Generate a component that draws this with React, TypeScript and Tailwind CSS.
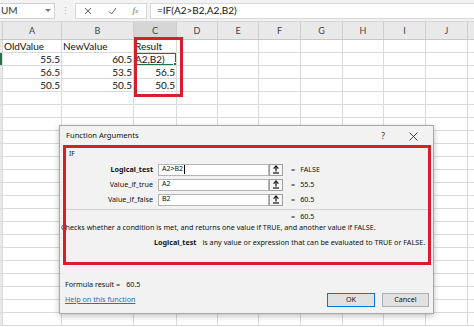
import React from 'react';

const colLetters = ['', 'A', 'B', 'C', 'D', 'E', 'F', 'G', 'H', 'I', 'J', ''];

type Cell = { t: string; right?: boolean };

const data: Record<number, Record<number, Cell>> = {
  0: { 1: { t: 'OldValue' }, 2: { t: 'NewValue' }, 3: { t: 'Result' } },
  1: { 1: { t: '55.5', right: true }, 2: { t: '60.5', right: true }, 3: { t: 'A2,B2)' } },
  2: { 1: { t: '56.5', right: true }, 2: { t: '53.5', right: true }, 3: { t: '56.5', right: true } },
  3: { 1: { t: '50.5', right: true }, 2: { t: '50.5', right: true }, 3: { t: '50.5', right: true } },
};

const gridCols =
  'grid grid-cols-[3px_59px_72px_43px_41px_41px_42px_42px_41px_42px_42px_42px]';

function RefButton() {
  return (
    <div className="w-[14px] h-[12px] border border-[#a0a0a0] bg-[#f6f6f6] flex items-center justify-center">
      <svg width="8" height="9" viewBox="0 0 8 9">
        <path d="M4 1 L4 6.5" stroke="#222" strokeWidth="1.3" />
        <path d="M1.6 3.6 L4 1 L6.4 3.6" stroke="#222" strokeWidth="1.3" fill="none" />
        <path d="M1 8 L7 8" stroke="#222" strokeWidth="1.3" />
      </svg>
    </div>
  );
}

function ArgRow({ label, value, result, bold }: { label: string; value: string; result: string; bold?: boolean }) {
  return (
    <div className="h-[15px] flex items-center">
      <div className={`w-[94px] shrink-0 text-right pr-[1px] ${bold ? 'font-bold' : ''}`}>{label}</div>
      <div className="ml-[4px] w-[111px] shrink-0 h-[12px] bg-white border border-[#b4b4b4] flex items-center pl-[3px] text-[7px]">
        {value}
        {bold && <span className="w-px h-[9px] bg-black ml-px" />}
      </div>
      <RefButton />
      <div className="ml-[8px]">=</div>
      <div className="ml-[5px]">{result}</div>
    </div>
  );
}

export default function App() {
  const rows = Array.from({ length: 22 }, (_, i) => i);
  return (
    <div className="relative w-[474px] h-[327px] overflow-hidden bg-white" style={{ fontFamily: 'Lato, "Liberation Sans", sans-serif' }}>
      {/* Formula bar */}
      <div className="h-[22px] bg-[#f3f3f3] flex items-center border-b border-[#d6d6d6] text-[10px] text-[#333]">
        <div className="w-[55px] h-[16px] bg-white border-y border-r border-[#d0d0d0] flex items-center justify-between pr-[3px]">
          <span className="pl-[1px]">UM</span>
          <svg width="6" height="4" viewBox="0 0 6 4"><path d="M0 0 L6 0 L3 3 Z" fill="#777" /></svg>
        </div>
        <div className="w-[20px] flex justify-center text-[#aaa] text-[9px]">⋮</div>
        <div className="w-[72px] h-[16px] bg-white border border-[#d8d8d8] flex items-center justify-around text-[#666]">
          <svg width="8" height="8" viewBox="0 0 8 8"><path d="M1 1 L7 7 M7 1 L1 7" stroke="#666" strokeWidth="1" /></svg>
          <svg width="9" height="8" viewBox="0 0 9 8"><path d="M1 4.5 L3.5 7 L8 1" stroke="#666" strokeWidth="1" fill="none" /></svg>
          <span className="italic text-[9px]" style={{ fontFamily: '"Liberation Serif", serif' }}>
            f<span className="text-[7px]">x</span>
          </span>
        </div>
        <div className="ml-[3px] flex-1 h-[16px] bg-white border-y border-l border-[#d8d8d8] flex items-center pl-[6px] text-[10px] text-[#111]">
          =IF(A2&gt;B2,A2,B2)
        </div>
      </div>

      {/* Column headers */}
      <div className={`${gridCols} h-[18px] bg-[#e9e9e9] border-b border-[#c8c8c8] text-[9px] text-[#444]`}>
        {colLetters.map((c, i) => (
          <div
            key={i}
            className={`flex items-center justify-center border-r border-[#cfcfcf] ${i === 3 ? 'bg-[#d6d6d6] text-[#1d5a37]' : ''}`}
          >
            {c}
          </div>
        ))}
      </div>

      {/* Cells */}
      {rows.map((r) => (
        <div key={r} className={`${gridCols} h-[13px] text-[10px] text-[#111]`}>
          {colLetters.map((_, c) => {
            const cell = data[r]?.[c];
            const selected = r === 1 && c === 3;
            return (
              <div
                key={c}
                className={`relative border-r border-b border-[#dadada] leading-[12px] px-[1px] whitespace-nowrap overflow-hidden ${
                  c === 0 ? (r === 1 ? 'bg-[#217346]' : 'bg-[#e9e9e9] border-[#c8c8c8]') : ''
                } ${cell?.right ? 'text-right' : ''}`}
              >
                {cell?.t}
                {selected && (
                  <>
                    <div className="absolute inset-[-1px] border-2 border-[#217346]" />
                    <div className="absolute right-[-1px] bottom-[-1px] w-[4px] h-[4px] bg-[#217346] border border-white" />
                  </>
                )}
              </div>
            );
          })}
        </div>
      ))}

      {/* Red annotation around C1:C4 */}
      <div className="absolute left-[134px] top-[37px] w-[49px] h-[60px] border-[3px] border-[#d3202b]" />

      {/* Dialog */}
      <div
        className="absolute left-[59px] top-[125px] w-[375px] h-[189px] bg-[#f2f2f2] border border-[#a8a8a8] shadow-[0_2px_6px_rgba(0,0,0,0.25)] text-[7.2px] text-[#111]"
        style={{ fontFamily: '"Noto Sans", "Liberation Sans", sans-serif' }}
      >
        <div className="h-[20px] flex items-center pl-[6px] text-[7.6px]">
          <span className="flex-1">Function Arguments</span>
          <span className="w-[20px] text-center text-[8.5px] text-[#333]">?</span>
          <span className="w-[40px] flex justify-center">
            <svg width="9" height="9" viewBox="0 0 9 9"><path d="M0.5 0.5 L8.5 8.5 M8.5 0.5 L0.5 8.5" stroke="#333" strokeWidth="0.9" /></svg>
          </span>
        </div>

        <div className="mx-[4px] border-t border-[#c8c8c8]" />
        <div className="h-[15px] flex items-center pl-[9px] text-[6.8px]">IF</div>
        <ArgRow label="Logical_test" value="A2>B2" result="FALSE" bold />
        <ArgRow label="Value_if_true" value="A2" result="55.5" />
        <ArgRow label="Value_if_false" value="B2" result="60.5" />
        <div className="mt-[2px] mx-[4px] border-t border-[#d0d0d0]" />
        <div className="h-[13px] flex items-center pl-[231px]">
          <span>=</span>
          <span className="ml-[5px]">60.5</span>
        </div>
        <div className="h-[9px] flex items-center pl-[1px] whitespace-nowrap">
          Checks whether a condition is met, and returns one value if TRUE, and another value if FALSE.
        </div>
        <div className="mt-[5px] h-[10px] flex items-center pl-[94px] whitespace-nowrap">
          <span className="font-bold">Logical_test</span>
          <span className="ml-[6px]">is any value or expression that can be evaluated to TRUE or FALSE.</span>
        </div>

        <div className="mt-[30px] h-[14px] flex items-center pl-[5px]">
          <span>Formula result =</span>
          <span className="ml-[6px]">60.5</span>
        </div>
        <div className="h-[17px] flex items-center pl-[5px]">
          <span className="flex-1 text-[#2a6fb8] underline">Help on this function</span>
          <div className="w-[48px] h-[14px] bg-[#e1e1e1] border border-[#0078d7] flex items-center justify-center">OK</div>
          <div className="ml-[7px] mr-[4px] w-[47px] h-[14px] bg-[#e1e1e1] border border-[#adadad] flex items-center justify-center">Cancel</div>
        </div>

        {/* Red annotation */}
        <div className="absolute left-[3px] top-[19px] w-[368px] h-[120px] border-[3px] border-[#d3202b]" />
      </div>
    </div>
  );
}
